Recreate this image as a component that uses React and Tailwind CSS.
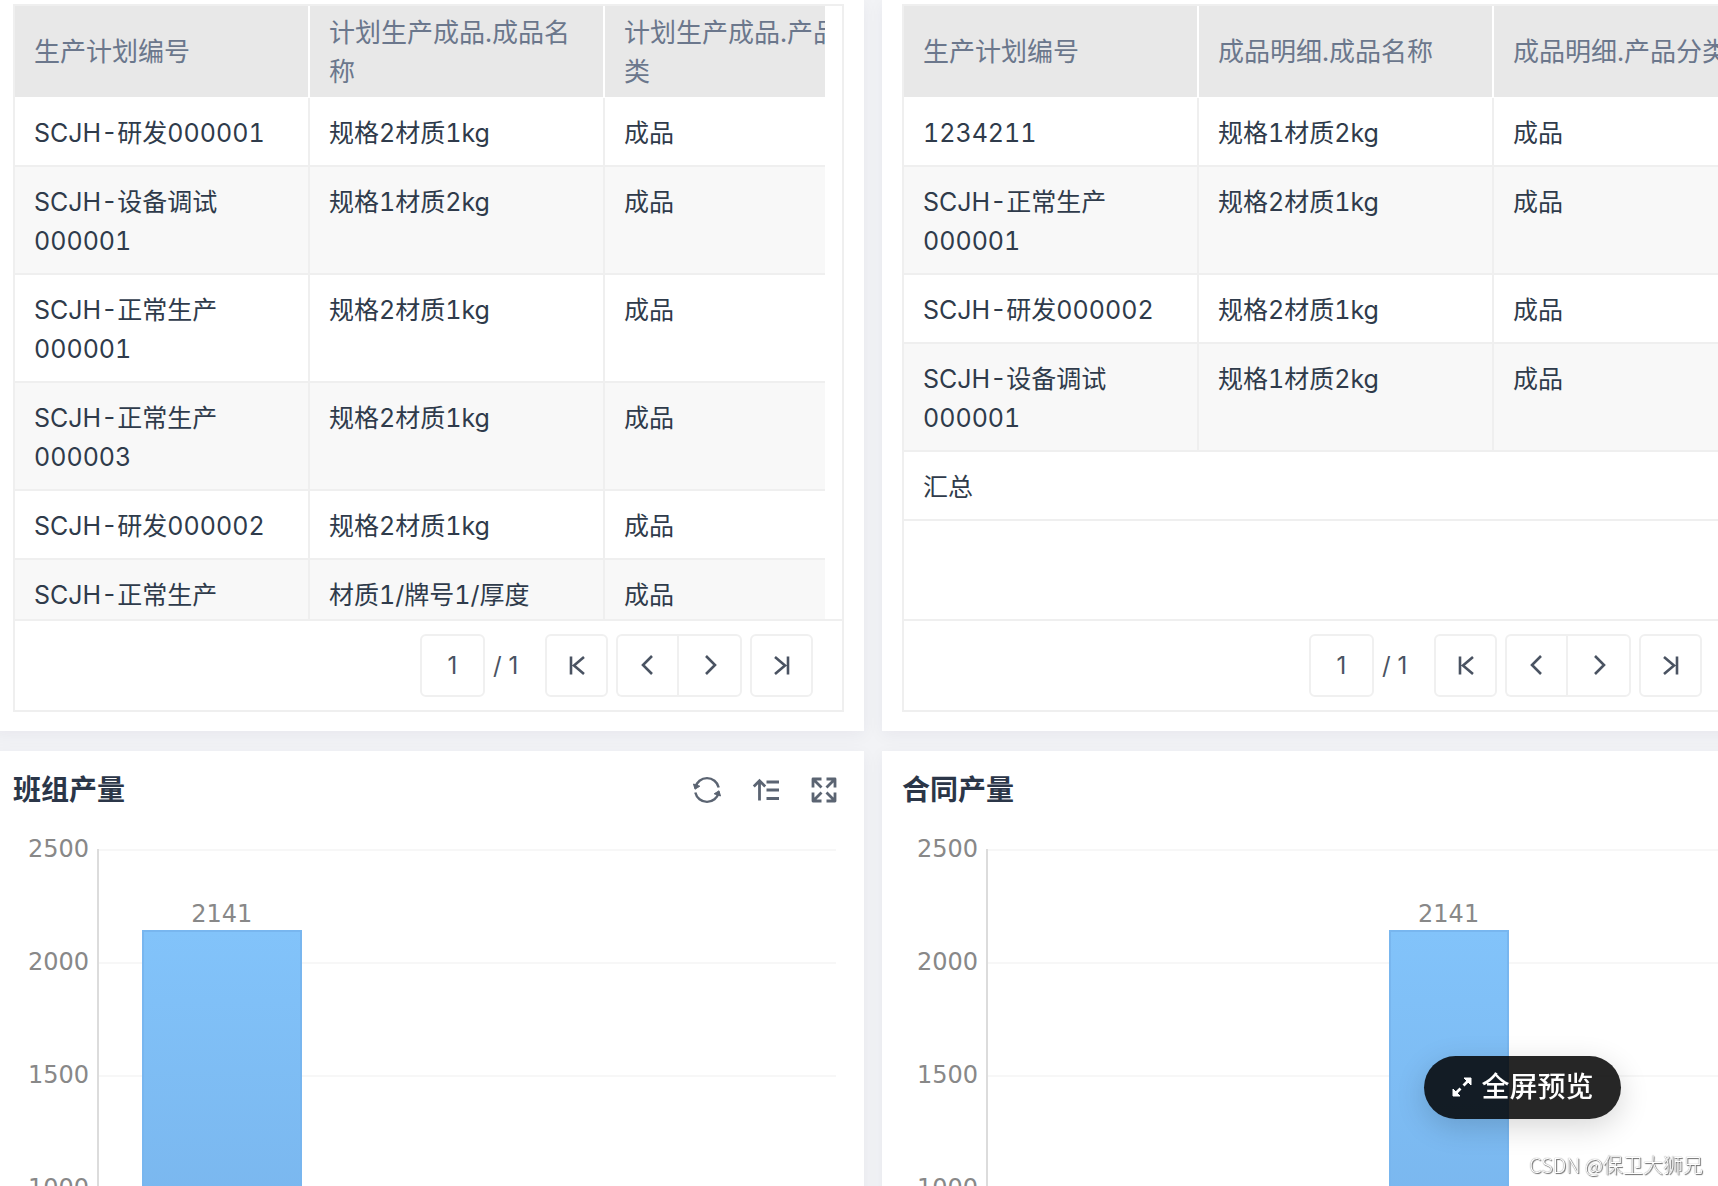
const leftTable = {
  columns: ['生产计划编号', '计划生产成品.成品名称', '计划生产成品.产品分类'],
  rows: [
    ['SCJH-研发000001', '规格2材质1kg', '成品'],
    ['SCJH-设备调试000001', '规格1材质2kg', '成品'],
    ['SCJH-正常生产000001', '规格2材质1kg', '成品'],
    ['SCJH-正常生产000003', '规格2材质1kg', '成品'],
    ['SCJH-研发000002', '规格2材质1kg', '成品'],
    ['SCJH-正常生产', '材质1/牌号1/厚度', '成品'],
  ],
};

const rightTable = {
  columns: ['生产计划编号', '成品明细.成品名称', '成品明细.产品分类'],
  rows: [
    ['1234211', '规格1材质2kg', '成品'],
    ['SCJH-正常生产000001', '规格2材质1kg', '成品'],
    ['SCJH-研发000002', '规格2材质1kg', '成品'],
    ['SCJH-设备调试000001', '规格1材质2kg', '成品'],
  ],
};

const ticks = [2500, 2000, 1500, 1000, 500];

function FirstIcon() {
  return (
    <svg width="18" height="22" viewBox="0 0 18 22" fill="none" stroke="currentColor" strokeWidth="2.600" aria-hidden="true">
      <path d="M3 1.500v18M16 2 6 10.500l10 8.500" />
    </svg>
  );
}

function LastIcon() {
  return (
    <svg width="18" height="22" viewBox="0 0 18 22" fill="none" stroke="currentColor" strokeWidth="2.600" aria-hidden="true">
      <path d="M15 1.500v18M2 2l10 8.500L2 19" />
    </svg>
  );
}

function PrevIcon() {
  return (
    <svg width="18" height="22" viewBox="0 0 18 22" fill="none" stroke="currentColor" strokeWidth="2.600" aria-hidden="true">
      <path d="M13 1 4 10l9 9" />
    </svg>
  );
}

function NextIcon() {
  return (
    <svg width="18" height="22" viewBox="0 0 18 22" fill="none" stroke="currentColor" strokeWidth="2.600" aria-hidden="true">
      <path d="m5 1 9 9-9 9" />
    </svg>
  );
}

function RefreshIcon() {
  return (
    <svg width="30" height="30" viewBox="0 0 30 30" fill="none" stroke="currentColor" strokeWidth="2.400" aria-hidden="true">
      <path d="M3.300 12.500A12 12 0 0 1 26.700 12.500M26.700 17.500A12 12 0 0 1 3.300 17.500" />
      <path d="M1.500 9 7.800 11.200 3 14.200ZM28.500 21 22.200 18.800 27 15.800Z" fill="currentColor" strokeWidth="1" />
    </svg>
  );
}

function SortIcon() {
  return (
    <svg width="28" height="28" viewBox="0 0 28 28" fill="none" stroke="currentColor" strokeWidth="2.800" aria-hidden="true">
      <path d="M7.500 24.500V5M1.800 10.500 7.500 4.800l5.700 5.700" />
      <path d="M14.500 6H27M14.500 14H27M14.500 22.500H27" />
    </svg>
  );
}

function ExpandIcon() {
  return (
    <svg width="28" height="28" viewBox="0 0 28 28" fill="none" stroke="currentColor" strokeWidth="2.800" strokeLinejoin="round" aria-hidden="true">
      <path d="M3 11.500V3h8.500M3.500 3.500 11.500 11.500" />
      <path d="M25 11.500V3h-8.500M24.500 3.500 16.500 11.500" />
      <path d="M3 16.500V25h8.500M3.500 24.500 11.500 16.500" />
      <path d="M25 16.500V25h-8.500M24.500 24.500 16.500 16.500" />
    </svg>
  );
}

function FullscreenIcon() {
  return (
    <svg width="22" height="22" viewBox="0 0 22 22" fill="none" stroke="currentColor" strokeWidth="2.800" aria-hidden="true">
      <path d="M12.500 9.500 17.500 4.500M9.500 12.500l-5 5" />
      <path d="M13 2h7V9L13 2ZM2 13v7H9L2 13Z" fill="currentColor" strokeWidth="1" />
    </svg>
  );
}

function DataTable({ data, summary }) {
  return (
    <table className="w-[885px] table-fixed border-separate border-spacing-0 text-left text-[25px] leading-[39px] text-[#2f3b4b] tabular-nums">
      <thead>
        <tr className="h-[92px] text-[26px] text-[#6b778c]">
          {data.columns.map((name) => (
            <th key={name} scope="col" className="border-r-2 border-b border-white bg-[#e8e8e8] px-[19px] py-0 font-normal">
              {name}
            </th>
          ))}
        </tr>
      </thead>
      <tbody>
        {data.rows.map((row, r) => (
          <tr key={r} className="align-top even:bg-[#f8f8f8]">
            {row.map((cell, i) => (
              <td key={i} className="border-r-2 border-b-2 border-[#efefef] px-[19px] pt-[16px] pb-[12px] break-words">
                {cell}
              </td>
            ))}
          </tr>
        ))}
        {summary && (
          <tr>
            <td colSpan={3} className="border-b-2 border-[#efefef] px-[19px] pt-[16px] pb-[12px]">
              {summary}
            </td>
          </tr>
        )}
      </tbody>
    </table>
  );
}

function Pager({ label }) {
  const button = 'flex h-[63px] items-center justify-center border-2 border-[#f0f0f0] bg-white';
  return (
    <nav aria-label={label} className="flex h-[91px] shrink-0 items-center justify-end border-t-2 border-[#efefef] pr-[29px] text-[24px] text-[#4a5362]">
      <input
        type="text"
        aria-label="页码"
        defaultValue="1"
        className="h-[63px] w-[65px] rounded-md border-2 border-[#f0f0f0] bg-white text-center"
      />
      <span className="ml-[8px] w-[52px]">/ 1</span>
      <button type="button" aria-label="首页" className={button + ' w-[63px] rounded-md'}>
        <FirstIcon />
      </button>
      <div className="ml-[8px] flex">
        <button type="button" aria-label="上一页" className={button + ' w-[61px] rounded-l-md border-r-0'}>
          <PrevIcon />
        </button>
        <button type="button" aria-label="下一页" className={button + ' w-[65px] rounded-r-md'}>
          <NextIcon />
        </button>
      </div>
      <button type="button" aria-label="末页" className={button + ' ml-[8px] w-[63px] rounded-md'}>
        <LastIcon />
      </button>
    </nav>
  );
}

function TableCard({ data, summary, label, scrollbar }) {
  return (
    <section className="min-w-0 bg-white px-[20px] pt-[4px] pb-[19px] shadow-[0_4px_16px_rgba(30,20,80,0.05)]">
      <div className="flex flex-col border-2 border-[#efefef]">
        <div className={'h-[613px] overflow-hidden ' + (scrollbar ? 'mr-[17px]' : '')}>
          <DataTable data={data} summary={summary} />
        </div>
        <Pager label={label} />
      </div>
    </section>
  );
}

function BarChart({ values }) {
  return (
    <div className="flex pr-[8px] font-['DejaVu_Sans',sans-serif] text-[24px] leading-[30px] text-[#888]">
      <div className="-mt-[15px] w-[84px] pr-[8px] text-right">
        {ticks.map((tick) => (
          <div key={tick} className="h-[113px]">
            {tick}
          </div>
        ))}
      </div>
      <div className="grid h-[565px] flex-1 border-l-2 border-[#dcdcdc]">
        <div className="col-start-1 row-start-1">
          {ticks.map((tick) => (
            <div key={tick} className="h-[113px] border-t-2 border-[#f7f7f7]" />
          ))}
        </div>
        <div className="z-10 col-start-1 row-start-1 flex h-[565px]">
          {values.map((value, i) => (
            <div key={i} className="flex h-full flex-1 flex-col items-center justify-end">
              {value > 0 && (
                <>
                  <span className="mb-[1px]">{value}</span>
                  <div
                    className="w-[65%] shrink-0 border-2 border-[#78b6ef] bg-linear-to-b from-[#82c3fa] to-[#74aee6]"
                    style={{ height: `${(value / 2500) * 100}%` }}
                  />
                </>
              )}
            </div>
          ))}
        </div>
      </div>
    </div>
  );
}

function ChartCard({ title, values, tools }) {
  return (
    <section className="min-w-0 bg-white px-[20px] pt-[15px] pb-[60px] shadow-[0_4px_16px_rgba(30,20,80,0.05)]">
      <header className="mb-[35px] flex h-[48px] items-center justify-between">
        <h2 className="text-[28px] font-bold text-[#2b3648]">{title}</h2>
        {tools && (
          <div className="flex items-center gap-[30px] pr-[6px] text-[#5b6472]">
            <button type="button" aria-label="刷新">
              <RefreshIcon />
            </button>
            <button type="button" aria-label="排序">
              <SortIcon />
            </button>
            <button type="button" aria-label="展开">
              <ExpandIcon />
            </button>
          </div>
        )}
      </header>
      <BarChart values={values} />
    </section>
  );
}

export default function App() {
  return (
    <main className="h-screen overflow-hidden bg-[#f2f3f6] font-['Inter','Noto_Sans_CJK_SC',sans-serif]">
      <div className="-mr-[35px] -ml-[7px] grid grid-cols-2 gap-x-[18px] gap-y-[20px]">
        <TableCard data={leftTable} label="生产计划分页" scrollbar />
        <TableCard data={rightTable} label="成品明细分页" summary="汇总" />
        <ChartCard title="班组产量" values={[2141, 0, 0]} tools />
        <ChartCard title="合同产量" values={[0, 0, 2141, 0]} />
      </div>
      <button
        type="button"
        className="fixed right-[97px] bottom-[67px] z-20 flex h-[63px] w-[197px] items-center justify-center gap-[8px] rounded-full bg-black/85 pb-[2px] text-[28px] font-medium whitespace-nowrap text-white shadow-[0_8px_30px_rgba(0,0,0,0.16)]"
      >
        <FullscreenIcon />
        全屏预览
      </button>
      <p className="fixed right-[15px] bottom-[6px] z-20 font-['Noto_Sans_CJK_SC',sans-serif] text-[20px] leading-[30px] font-light text-white [text-shadow:1px_1px_1px_#666,0_0_1px_#666]">
        CSDN @保卫大狮兄
      </p>
    </main>
  );
}
